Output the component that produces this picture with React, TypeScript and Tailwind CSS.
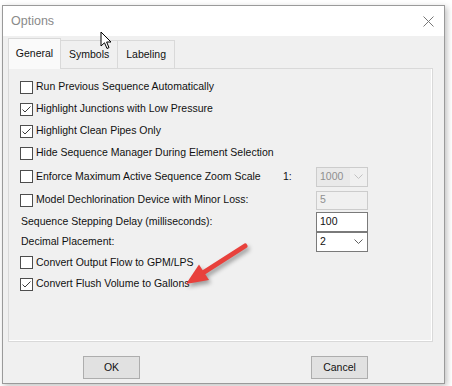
import React from "react";

const font = { fontFamily: '"Liberation Sans", Arial, sans-serif' };

function CheckBox({ checked }: { checked?: boolean }) {
  return (
    <div className="w-[13px] h-[13px] border border-[#4d4d4d] bg-white shrink-0 flex items-center justify-center">
      {checked && (
        <svg width="11" height="11" viewBox="0 0 11 11">
          <polyline points="1.5,5.5 4,8 9.5,2.5" fill="none" stroke="#3a3a3a" strokeWidth="1" />
        </svg>
      )}
    </div>
  );
}

function CheckRow({ label, checked, h = "h-[22px]", children }: { label: string; checked?: boolean; h?: string; children?: React.ReactNode }) {
  return (
    <div className={`${h} flex items-center pl-[11px] pr-[64px]`}>
      <CheckBox checked={checked} />
      <span className="ml-[3px] flex-1 whitespace-nowrap">{label}</span>
      {children}
    </div>
  );
}

function Chevron({ color }: { color: string }) {
  return (
    <svg width="9" height="6" viewBox="0 0 9 6">
      <polyline points="0.5,0.5 4.5,4.5 8.5,0.5" fill="none" stroke={color} strokeWidth="1" />
    </svg>
  );
}

function Tab({ label, active }: { label: string; active?: boolean }) {
  if (active) {
    return (
      <div className="relative z-10 h-[31px] w-[53px] border border-b-0 border-[#d9d9d9] bg-[#fafafa] flex items-center justify-center -mb-px">
        {label}
      </div>
    );
  }
  return (
    <div className="h-[28px] mt-[2px] border border-b-0 border-l-0 border-[#d9d9d9] bg-[#f0f0f0] flex items-center justify-center px-[8px]">
      {label}
    </div>
  );
}

export default function App() {
  return (
    <div className="relative w-[452px] h-[386px] bg-white overflow-hidden pt-[5px] pl-[2px] text-[10.5px] text-[#111]" style={font}>
      <div className="w-[443px] h-[379px] border border-[#9a9a9a] flex flex-col shadow-[2px_2px_6px_rgba(0,0,0,0.25)]">
        {/* title bar */}
        <div className="h-[30px] bg-white flex items-center justify-between pl-[8px] pr-[10px]">
          <span className="text-[12.5px] text-[#8a8a8a]">Options</span>
          <svg width="11" height="11" viewBox="0 0 11 11">
            <path d="M0.5 0.5 L10.5 10.5 M10.5 0.5 L0.5 10.5" stroke="#777" strokeWidth="1" />
          </svg>
        </div>

        <div className="flex-1 bg-[#f0f0f0] pl-[5px] flex flex-col">
          {/* tabs */}
          <div className="mt-[2px] h-[30px] flex">
            <Tab label="General" active />
            <Tab label="Symbols" />
            <Tab label="Labeling" />
          </div>

          {/* panel */}
          <div className="w-[425px] h-[274px] border border-[#d9d9d9] bg-[#f0f0f0] pt-[7px] shadow-[inset_-1px_-1px_0_#ffffff]">
            <CheckRow label="Run Previous Sequence Automatically" />
            <CheckRow label="Highlight Junctions with Low Pressure" checked />
            <CheckRow label="Highlight Clean Pipes Only" checked />
            <CheckRow label="Hide Sequence Manager During Element Selection" />
            <CheckRow label="Enforce Maximum Active Sequence Zoom Scale" h="h-[25px]">
              <span className="w-[33px]">1:</span>
              <div className="w-[52px] h-[20px] border border-[#cccccc] bg-[#f0f0f0] flex items-center text-[#8f8f8f]">
                <span className="flex-1 pl-[3px] h-full flex items-center bg-[#e9e9e9]">1000</span>
                <span className="w-[17px] flex items-center justify-center">
                  <Chevron color="#c2c2c2" />
                </span>
              </div>
            </CheckRow>
            <CheckRow label="Model Dechlorination Device with Minor Loss:">
              <div className="w-[52px] h-[19px] border border-[#cccccc] bg-[#f0f0f0] flex items-center pl-[3px] text-[#8f8f8f]">5</div>
            </CheckRow>
            <div className="h-[21px] flex items-center pl-[12px] pr-[64px]">
              <span className="flex-1">Sequence Stepping Delay (milliseconds):</span>
              <div className="w-[52px] h-[20px] border border-[#7a7a7a] bg-white flex items-center pl-[3px]">100</div>
            </div>
            <div className="h-[20px] flex items-center pl-[12px] pr-[64px]">
              <span className="flex-1">Decimal Placement:</span>
              <div className="w-[52px] h-[20px] border border-[#7a7a7a] bg-white flex items-center">
                <span className="flex-1 pl-[3px]">2</span>
                <span className="w-[17px] flex items-center justify-center">
                  <Chevron color="#606060" />
                </span>
              </div>
            </div>
            <CheckRow label="Convert Output Flow to GPM/LPS" h="h-[21px]" />
            <CheckRow label="Convert Flush Volume to Gallons" checked />
          </div>

          {/* buttons */}
          <div className="mt-[14px] flex pl-[75px] gap-[171px]">
            <button className="w-[57px] h-[23px] border border-[#adadad] bg-[#e1e1e1] text-[#111]">OK</button>
            <button className="w-[57px] h-[23px] border border-[#adadad] bg-[#e1e1e1] text-[#111]">Cancel</button>
          </div>
        </div>
      </div>

      {/* red annotation arrow */}
      <svg className="absolute left-0 top-0 pointer-events-none" width="452" height="386" style={{ filter: "drop-shadow(2px 3px 2px rgba(0,0,0,0.35))" }}>
        <line x1="245" y1="246" x2="202" y2="273.5" stroke="#e8413c" strokeWidth="5" strokeLinecap="round" />
        <polygon points="186,284 199,264.5 209,280" fill="#e8413c" />
      </svg>

      {/* mouse cursor */}
      <svg className="absolute left-[100px] top-[31px] pointer-events-none" width="14" height="20" viewBox="0 0 14 20">
        <path d="M1 1 L1 15 L4.5 11.8 L7 17.5 L9 16.6 L6.6 11 L11 11 Z" fill="#fff" stroke="#000" strokeWidth="1" strokeLinejoin="round" />
      </svg>
    </div>
  );
}
